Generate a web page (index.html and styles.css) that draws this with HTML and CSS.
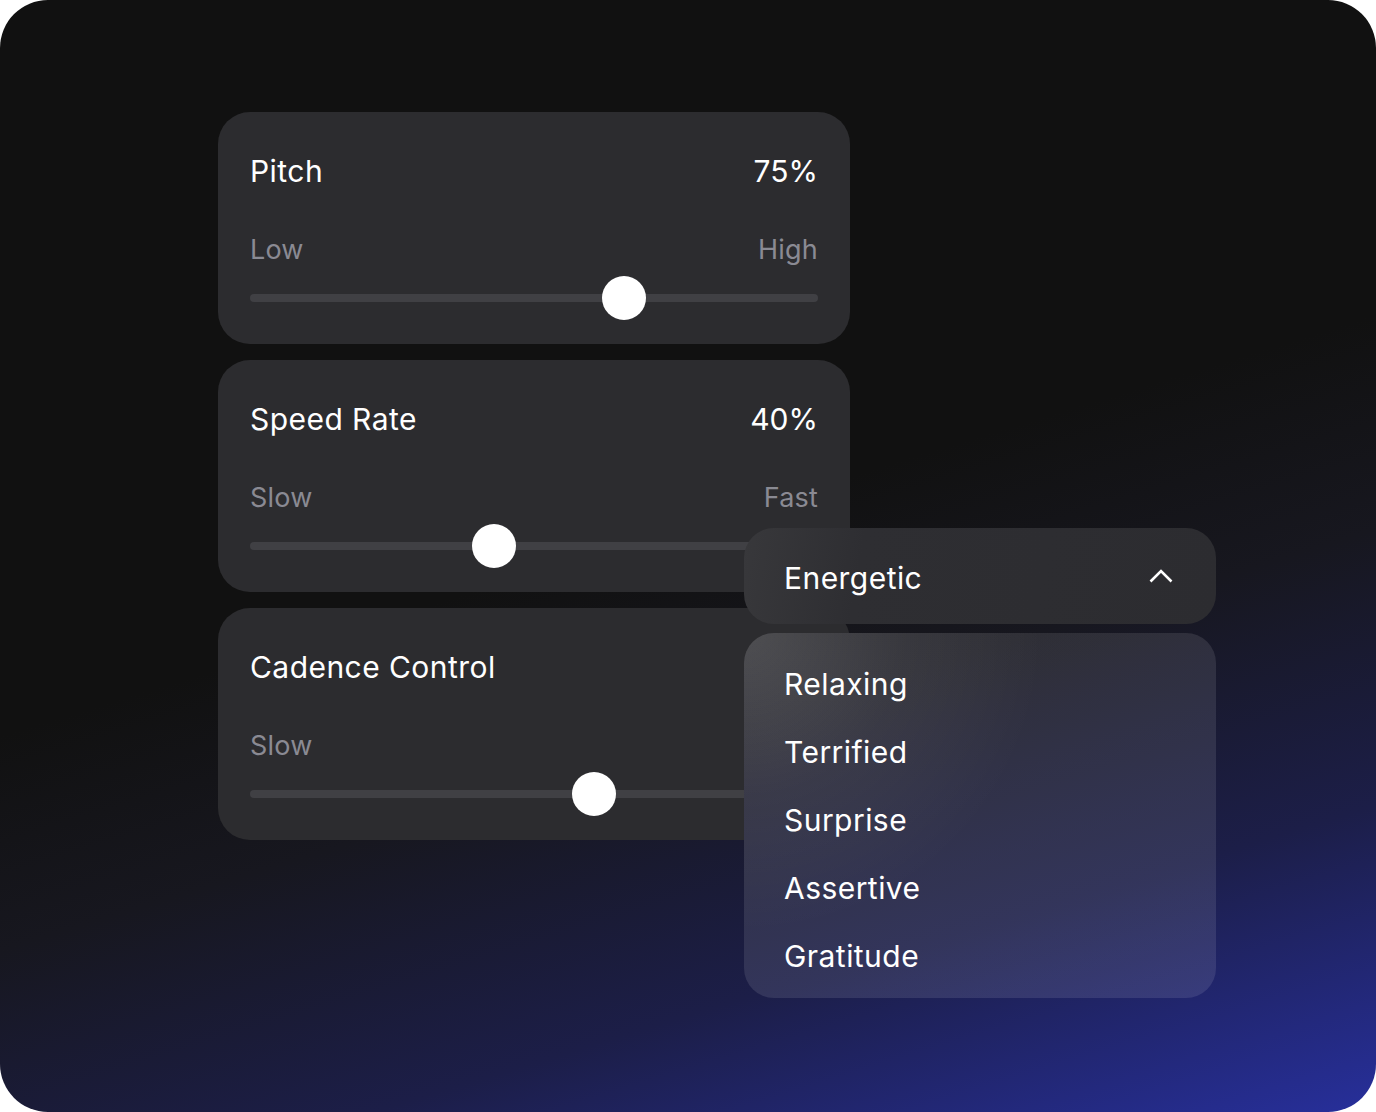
FILE: index.html
```html
<!DOCTYPE html>
<html lang="en">
<head>
<meta charset="utf-8">
<title>Voice Controls</title>
<link rel="stylesheet" href="styles.css">
</head>
<body>
<div class="stage">
  <div class="stack">
    <section class="card">
      <div class="card-head"><span class="title">Pitch</span><span class="value">75%</span></div>
      <div class="range-labels"><span>Low</span><span>High</span></div>
      <div class="slider"><div class="track"></div><div class="thumb" style="--pos:65.9%"></div></div>
    </section>
    <section class="card">
      <div class="card-head"><span class="title">Speed Rate</span><span class="value">40%</span></div>
      <div class="range-labels"><span>Slow</span><span>Fast</span></div>
      <div class="slider"><div class="track"></div><div class="thumb" style="--pos:43%"></div></div>
    </section>
    <section class="card">
      <div class="card-head"><span class="title">Cadence Control</span><span class="value"></span></div>
      <div class="range-labels"><span>Slow</span><span></span></div>
      <div class="slider"><div class="track"></div><div class="thumb" style="--pos:60.5%"></div></div>
    </section>
  </div>

  <div class="dropdown">
    <div class="select">
      <span class="select-label">Energetic</span>
      <svg class="chevron" width="24" height="14" viewBox="0 0 24 14" fill="none">
        <path d="M1.5 12.5 L12 2 L22.5 12.5" stroke="#ffffff" stroke-width="2.6" stroke-linecap="butt" stroke-linejoin="miter"/>
      </svg>
    </div>
    <ul class="menu">
      <li>Relaxing</li>
      <li>Terrified</li>
      <li>Surprise</li>
      <li>Assertive</li>
      <li>Gratitude</li>
    </ul>
  </div>
</div>
</body>
</html>
```

FILE: styles.css
```css
html, body {
  margin: 0;
  padding: 0;
  background: #ffffff;
}

body {
  font-family: Inter, "Noto Sans", "Liberation Sans", sans-serif;
  color: #ffffff;
}

.stage {
  position: relative;
  width: 1376px;
  height: 1112px;
  box-sizing: border-box;
  border-radius: 48px;
  overflow: hidden;
  padding: 112px 0 0 218px;
  background: linear-gradient(163deg, #111111 0%, #111111 48%, #17171f 62%, #1c1e48 80%, #272f9b 100%);
}

.stack {
  display: flex;
  flex-direction: column;
  gap: 16px;
  width: 632px;
}

.card {
  box-sizing: border-box;
  height: 232px;
  padding: 40px 32px 24px 32px;
  background: #2c2c2f;
  border-radius: 32px;
  display: flex;
  flex-direction: column;
}

.card-head {
  display: flex;
  justify-content: space-between;
  font-size: 30px;
  line-height: 38px;
  font-weight: 400;
  letter-spacing: 0.45px;
}

.value {
  letter-spacing: 0;
}

.range-labels {
  display: flex;
  justify-content: space-between;
  margin-top: 44px;
  font-size: 27px;
  line-height: 32px;
  letter-spacing: 0.2px;
  color: #8a8a93;
}

.slider {
  position: relative;
  margin-top: 10px;
  height: 44px;
  display: flex;
  align-items: center;
}

.track {
  width: 100%;
  height: 8px;
  border-radius: 4px;
  background: #404044;
}

.thumb {
  position: absolute;
  top: 0;
  left: calc(var(--pos) - 22px);
  width: 44px;
  height: 44px;
  border-radius: 50%;
  background: #ffffff;
}

.dropdown {
  position: absolute;
  left: 744px;
  top: 528px;
  width: 472px;
  display: flex;
  flex-direction: column;
  gap: 9px;
}

.select {
  box-sizing: border-box;
  height: 96px;
  padding: 0 44px 0 40px;
  display: flex;
  align-items: center;
  justify-content: space-between;
  border-radius: 30px;
  background: linear-gradient(100deg, #38383b 0%, #2e2e32 25%, #2c2c30 100%);
  font-size: 30px;
  line-height: 36px;
  letter-spacing: 0.45px;
}

.select-label {
  padding-top: 3px;
}

.chevron {
  display: block;
  margin-right: -1px;
}

.menu {
  list-style: none;
  margin: 0;
  box-sizing: border-box;
  height: 365px;
  padding: 31px 40px 0 40px;
  border-radius: 30px;
  background:
    radial-gradient(circle at 0 0, rgba(255,255,255,0.16) 0, rgba(255,255,255,0.05) 160px, rgba(255,255,255,0) 300px),
    linear-gradient(rgba(255,255,255,0.1), rgba(255,255,255,0.1)),
    linear-gradient(163deg, #111111 0%, #111111 48%, #17171f 62%, #1c1e48 80%, #272f9b 100%) fixed;
  background-size: auto, auto, 1376px 1112px;
  display: flex;
  flex-direction: column;
  gap: 28px;
  font-size: 30px;
  line-height: 40px;
  letter-spacing: 0.45px;
}

.menu li {
  margin: 0;
}
```
